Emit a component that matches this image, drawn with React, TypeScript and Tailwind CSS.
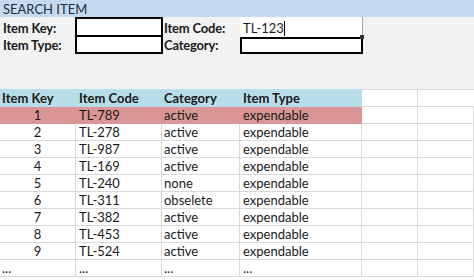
import React from "react";

const rows = [
  { key: "1", code: "TL-789", cat: "active", type: "expendable" },
  { key: "2", code: "TL-278", cat: "active", type: "expendable" },
  { key: "3", code: "TL-987", cat: "active", type: "expendable" },
  { key: "4", code: "TL-169", cat: "active", type: "expendable" },
  { key: "5", code: "TL-240", cat: "none", type: "expendable" },
  { key: "6", code: "TL-311", cat: "obselete", type: "expendable" },
  { key: "7", code: "TL-382", cat: "active", type: "expendable" },
  { key: "8", code: "TL-453", cat: "active", type: "expendable" },
  { key: "9", code: "TL-524", cat: "active", type: "expendable" },
];

const cols = "grid grid-cols-[76px_86px_78px_122px_56px_1fr]";
const cell = "h-[17px] border-b border-r border-[#d9d9d9] leading-[17px] whitespace-nowrap overflow-hidden";

const App = () => {
  return (
    <div className="w-[474px] h-[280px] overflow-hidden bg-white text-[13px] text-[#1a1a1a] font-['Lato',sans-serif]">
      <div className="h-[17px] bg-[#c5d9f1] pl-[3px] leading-[18px] text-[#1f2d3d]">SEARCH ITEM</div>

      <div className="h-[72px] bg-[#f2f2f2]">
        <div className="grid grid-cols-[75px_88px_77px_123px_1fr] grid-rows-[20px_17px] font-bold tracking-[-0.2px]">
          <div className="pl-[3px] leading-[22px]">Item Key:</div>
          <div className="border-2 border-black bg-white" />
          <div className="pl-[1px] leading-[22px]">Item Code:</div>
          <div className="border-r border-[#a6a6a6] bg-white pl-[3px] leading-[22px] font-normal tracking-normal">
            TL-123<span className="inline-block w-px h-[15px] bg-black align-[-3px]" />
          </div>
          <div />
          <div className="pl-[3px] leading-[17px]">Item Type:</div>
          <div className="border-2 border-t-0 border-black bg-white" />
          <div className="pl-[1px] leading-[17px]">Category:</div>
          <div className="relative border-2 border-black bg-white">
            <span className="absolute -right-[3px] -top-[4px] w-[4px] h-[4px] bg-[#333]" />
          </div>
          <div />
        </div>
      </div>

      <div className={cols}>
        <div className="h-[18px] bg-[#b7dee8] pl-[2px] font-bold leading-[18px]">Item Key</div>
        <div className="h-[18px] bg-[#b7dee8] pl-[3px] font-bold leading-[18px]">Item Code</div>
        <div className="h-[18px] bg-[#b7dee8] pl-[2px] font-bold leading-[18px]">Category</div>
        <div className="h-[18px] bg-[#b7dee8] pl-[3px] font-bold leading-[18px]">Item Type</div>
        <div className="h-[18px] border-r border-b border-t border-[#d9d9d9]" />
        <div className="h-[18px] border-b border-t border-[#d9d9d9]" />

        {rows.map((r, i) => {
          const hl = i === 0;
          const bg = hl ? "bg-[#da9694] border-[#da9694]" : "";
          return (
            <React.Fragment key={r.key}>
              <div className={`${cell} ${bg} text-center`}>{r.key}</div>
              <div className={`${cell} ${bg} pl-[3px]`}>{r.code}</div>
              <div className={`${cell} ${bg} pl-[2px]`}>{r.cat}</div>
              <div className={`${cell} ${bg} pl-[3px]`}>{r.type}</div>
              <div className={cell} />
              <div className={cell} />
            </React.Fragment>
          );
        })}

        <div className={`${cell} pl-[2px]`}>...</div>
        <div className={`${cell} pl-[3px]`}>...</div>
        <div className={`${cell} pl-[2px]`}>...</div>
        <div className={`${cell} pl-[3px]`}>...</div>
        <div className={cell} />
        <div className={cell} />
      </div>
    </div>
  );
};

export default App;
